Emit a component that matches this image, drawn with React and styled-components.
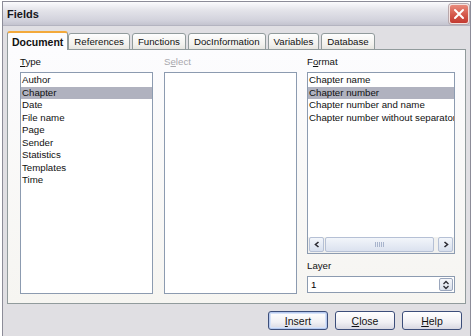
import styled, { createGlobalStyle } from "styled-components";

const GlobalStyle = createGlobalStyle`
  html, body {
    margin: 0;
    padding: 0;
    background: #ffffff;
  }
  body {
    font-family: "Liberation Sans", Arial, sans-serif;
    color: #000;
  }
`;

const Window = styled.div`
  margin: 1px 0 0 2px;
  width: 467px;
  height: 335px;
  border: 1px solid #8c8c98;
  border-bottom: none;
  background: #e0dfe3;
  display: flex;
  flex-direction: column;
  overflow: hidden;
`;

const TitleBar = styled.div`
  height: 23px;
  flex: none;
  display: flex;
  align-items: center;
  justify-content: space-between;
  padding: 0 1px 0 4px;
  background: linear-gradient(#fbfbfd, #e4e4ea 35%, #d2d2dc 80%, #c4c4cf);
  border-bottom: 1px solid #b4b4c0;
`;

const Title = styled.span`
  font-size: 11px;
  font-weight: bold;
  color: #15151a;
  padding-top: 1px;
`;

const CloseBox = styled.div`
  width: 18px;
  height: 18px;
  border: 1px solid #f4e2df;
  border-radius: 3px;
  background: linear-gradient(#e98b7c, #d4574a 55%, #c23a31);
  display: flex;
  align-items: center;
  justify-content: center;
  box-shadow: 0 0 0 1px #b8a8ac;
`;

const Body = styled.div`
  flex: 1;
  padding: 4px 4px 0 4px;
  display: flex;
  flex-direction: column;
`;

const TabRow = styled.div`
  display: flex;
  align-items: flex-end;
  height: 20px;
  gap: 2px;
  margin-bottom: -1px;
  position: relative;
  z-index: 1;
`;

const Tab = styled.div`
  height: ${(p) => (p.$active ? "19px" : "17px")};
  box-sizing: border-box;
  padding: 0 ${(p) => (p.$active ? "4px" : "5px")};
  margin-right: ${(p) => (p.$active ? "-2px" : "0")};
  font-size: ${(p) => (p.$active ? "10.5px" : "9.7px")};
  font-weight: ${(p) => (p.$active ? "bold" : "normal")};
  display: flex;
  align-items: center;
  border: 1px solid #919b9c;
  border-bottom: ${(p) => (p.$active ? "none" : "1px solid #919b9c")};
  border-radius: 3px 3px 0 0;
  background: ${(p) =>
    p.$active ? "#fcfcfe" : "linear-gradient(#fefefe, #f2f1ed 70%, #e6e5e0)"};
  border-top: ${(p) => (p.$active ? "2px solid #f3a93b" : "1px solid #919b9c")};
  color: #111;
`;

const Panel = styled.div`
  height: 255px;
  box-sizing: border-box;
  border: 1px solid #919b9c;
  background: linear-gradient(#fcfcfe, #f6f5f1);
  padding: 6px 11px 9px 12px;
  display: grid;
  grid-template-columns: 133px 133px 147px;
  column-gap: 11px;
`;

const Column = styled.div`
  display: flex;
  flex-direction: column;
  min-width: 0;
  margin-left: ${(p) => (p.$shift ? "-1px" : "0")};
`;

const Label = styled.div`
  font-size: 9.7px;
  line-height: 12px;
  height: 12px;
  margin-bottom: 4px;
  margin-top: ${(p) => (p.$top ? `${p.$top}px` : "0")};
  color: ${(p) => (p.$disabled ? "#a9a8ad" : "#111")};
`;

const Mn = styled.span`
  text-decoration: underline;
  text-underline-offset: 1px;
`;

const ListBox = styled.div`
  flex: ${(p) => (p.$h ? "none" : "1")};
  height: ${(p) => (p.$h ? `${p.$h}px` : "auto")};
  box-sizing: border-box;
  border: 1px solid #8c9bb0;
  background: #ffffff;
  padding-top: 1px;
  display: flex;
  flex-direction: column;
  overflow: hidden;
`;

const Items = styled.div`
  flex: 1;
  overflow: hidden;
`;

const Item = styled.div`
  font-size: 9.7px;
  line-height: 12.5px;
  height: 12.5px;
  padding-left: 1px;
  white-space: nowrap;
  overflow: hidden;
  color: #111;
  background: ${(p) => (p.$sel ? "#b0b2bf" : "transparent")};
`;

const HScroll = styled.div`
  height: 15px;
  flex: none;
  display: flex;
  align-items: stretch;
  gap: 1px;
  padding: 0 1px 1px 1px;
  background: #f1f1ef;
`;

const ScrollBtn = styled.div`
  width: 15px;
  box-sizing: border-box;
  border: 1px solid #b5c0d5;
  border-radius: 2px;
  background: linear-gradient(#f3f6fb, #d8e0ee);
  display: flex;
  align-items: center;
  justify-content: center;
`;

const Thumb = styled.div`
  flex: 1;
  margin-right: 3px;
  box-sizing: border-box;
  border: 1px solid #b5c0d5;
  border-radius: 2px;
  background: linear-gradient(#f2f5fa, #dbe2ef);
  display: flex;
  align-items: center;
  justify-content: center;
`;

const Spin = styled.div`
  height: 17px;
  box-sizing: border-box;
  border: 1px solid #8c9bb0;
  background: #fff;
  display: flex;
  align-items: center;
  justify-content: space-between;
  padding: 0 1px 0 3px;
  font-size: 9.7px;
`;

const SpinBtn = styled.div`
  width: 14px;
  height: 13px;
  box-sizing: border-box;
  border: 1px solid #9aa6bc;
  border-radius: 2px;
  background: linear-gradient(#f5f7fb, #d9dfea);
  display: flex;
  align-items: center;
  justify-content: center;
`;

const ButtonRow = styled.div`
  display: flex;
  justify-content: flex-end;
  gap: 7px;
  padding: 7px 4px 0 0;
`;

const Button = styled.div`
  width: 60px;
  height: 19px;
  box-sizing: border-box;
  border: 1px solid #3c4e7a;
  border-radius: 3px;
  background: linear-gradient(#ffffff, #f0f0f4 60%, #d8d8e2);
  font-size: 10.5px;
  display: flex;
  align-items: center;
  justify-content: center;
  color: #111;
  box-shadow: ${(p) =>
    p.$default ? "inset 0 0 0 1px #b6c9ef, inset 0 0 0 2px #d6e2f8" : "none"};
`;

const Chevron = ({ dir }) => {
  const d = {
    left: "M5.5 2 L2.5 4.5 L5.5 7",
    right: "M2.5 2 L5.5 4.5 L2.5 7",
  }[dir];
  return (
    <svg width="8" height="9" viewBox="0 0 8 9">
      <path d={d} fill="none" stroke="#2b2b33" strokeWidth="1.6" />
    </svg>
  );
};

const typeItems = [
  "Author",
  "Chapter",
  "Date",
  "File name",
  "Page",
  "Sender",
  "Statistics",
  "Templates",
  "Time",
];

const formatItems = [
  "Chapter name",
  "Chapter number",
  "Chapter number and name",
  "Chapter number without separator",
];

const tabs = [
  "Document",
  "References",
  "Functions",
  "DocInformation",
  "Variables",
  "Database",
];

export default function App() {
  return (
    <>
      <GlobalStyle />
      <Window>
        <TitleBar>
          <Title>Fields</Title>
          <CloseBox>
            <svg width="12" height="12" viewBox="0 0 12 12">
              <path
                d="M2 2 L10 10 M10 2 L2 10"
                stroke="#ffffff"
                strokeWidth="2"
                strokeLinecap="round"
              />
            </svg>
          </CloseBox>
        </TitleBar>
        <Body>
          <TabRow>
            {tabs.map((t, i) => (
              <Tab key={t} $active={i === 0}>
                {t}
              </Tab>
            ))}
          </TabRow>
          <Panel>
            <Column>
              <Label>
                <Mn>T</Mn>ype
              </Label>
              <ListBox>
                <Items>
                  {typeItems.map((t) => (
                    <Item key={t} $sel={t === "Chapter"}>
                      {t}
                    </Item>
                  ))}
                </Items>
              </ListBox>
            </Column>
            <Column>
              <Label $disabled>
                S<Mn>e</Mn>lect
              </Label>
              <ListBox />
            </Column>
            <Column $shift>
              <Label>
                F<Mn>o</Mn>rmat
              </Label>
              <ListBox $h={182}>
                <Items>
                  {formatItems.map((t) => (
                    <Item key={t} $sel={t === "Chapter number"}>
                      {t}
                    </Item>
                  ))}
                </Items>
                <HScroll>
                  <ScrollBtn>
                    <Chevron dir="left" />
                  </ScrollBtn>
                  <Thumb>
                    <svg width="9" height="5" viewBox="0 0 9 5">
                      <path
                        d="M0.5 0 V5 M2.5 0 V5 M4.5 0 V5 M6.5 0 V5 M8.5 0 V5"
                        stroke="#a8b4cc"
                        strokeWidth="1"
                      />
                    </svg>
                  </Thumb>
                  <ScrollBtn>
                    <Chevron dir="right" />
                  </ScrollBtn>
                </HScroll>
              </ListBox>
              <Label $top={6}>Layer</Label>
              <Spin>
                <span>1</span>
                <SpinBtn>
                  <svg width="8" height="10" viewBox="0 0 8 10">
                    <path
                      d="M1.5 4 L4 1.5 L6.5 4 M1.5 6 L4 8.5 L6.5 6"
                      fill="none"
                      stroke="#2b2b33"
                      strokeWidth="1.3"
                    />
                  </svg>
                </SpinBtn>
              </Spin>
            </Column>
          </Panel>
          <ButtonRow>
            <Button $default>
              <span>
                <Mn>I</Mn>nsert
              </span>
            </Button>
            <Button>
              <span>
                <Mn>C</Mn>lose
              </span>
            </Button>
            <Button>
              <span>
                <Mn>H</Mn>elp
              </span>
            </Button>
          </ButtonRow>
        </Body>
      </Window>
    </>
  );
}
